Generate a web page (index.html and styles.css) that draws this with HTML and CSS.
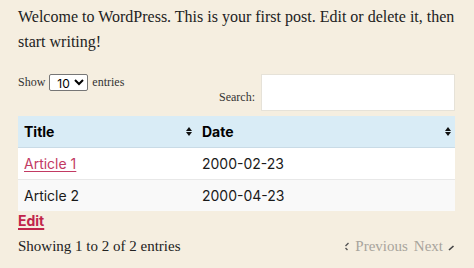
FILE: index.html
```html
<!DOCTYPE html>
<html>
<head>
  <title>First post</title>
  <link rel="stylesheet" href="styles.css">
</head>
<body>
  <div class="content">
    <p class="intro">Welcome to WordPress. This is your first post. Edit or delete it, then start writing!</p>

    <div class="controls">
      <div class="length">
        <label>Show
          <select class="lengthSelect">
            <option>10</option>
            <option>25</option>
            <option>50</option>
          </select>
          entries</label>
      </div>
      <div class="filter">
        <label>Search: <input type="search" class="searchInput"></label>
      </div>
    </div>

    <table class="posts">
      <thead>
        <tr>
          <th class="colTitle">Title <span class="sort"></span></th>
          <th>Date <span class="sort"></span></th>
        </tr>
      </thead>
      <tbody>
        <tr class="odd">
          <td><a href="#">Article 1</a></td>
          <td>2000-02-23</td>
        </tr>
        <tr class="even">
          <td>Article 2</td>
          <td>2000-04-23</td>
        </tr>
      </tbody>
    </table>

    <a class="editLink" href="#">Edit</a>

    <div class="footer">
      <div class="info">Showing 1 to 2 of 2 entries</div>
      <div class="paginate">
        <svg class="pgIcon" width="6" height="9" viewBox="0 0 6 9"><path d="M4.5 1 L1.5 4 M1.5 6 L3.5 8" stroke="#555" stroke-width="1.4" fill="none"/></svg>
        <span class="pgBtn">Previous</span>
        <span class="pgBtn">Next</span>
        <svg class="pgIcon" width="7" height="9" viewBox="0 0 7 9"><path d="M1 8 L5.5 4" stroke="#444" stroke-width="1.6" fill="none"/></svg>
      </div>
    </div>
  </div>
</body>
</html>
```

FILE: styles.css
```css
body {
  margin: 0;
  background-color: #f5eee0;
  color: #222;
  font-family: "Liberation Serif", "DejaVu Serif", serif;
}
.content {
  padding: 4px 19px 0 18px;
}
.intro {
  margin: 0 0 20px;
  font-size: 16px;
  line-height: 25px;
  color: #222;
}
.controls {
  display: flex;
  justify-content: space-between;
  align-items: flex-start;
  font-size: 12px;
  color: #333;
}
.length label {
  display: flex;
  align-items: center;
  gap: 4px;
}
.lengthSelect {
  width: 39px;
  height: 17px;
  padding: 0 0 0 3px;
  font-family: "Inter", "Noto Sans", sans-serif;
  font-size: 12px;
  border: 1px solid #767676;
  border-radius: 2px;
  background: #fff;
  color: #000;
}
.filter label {
  display: flex;
  align-items: center;
  gap: 6px;
  padding-top: 10px;
}
.searchInput {
  width: 194px;
  height: 37px;
  box-sizing: border-box;
  margin-top: -10px;
  border: 1px solid #e6e2d8;
  background: #fff;
  outline: none;
}
.posts {
  width: 100%;
  margin-top: 5px;
  border-collapse: collapse;
  font-family: "Inter", "Noto Sans", sans-serif;
  font-size: 14px;
  color: #1a1a1a;
}
.posts th {
  position: relative;
  height: 31px;
  padding: 0 6px;
  text-align: left;
  font-weight: 700;
  font-size: 14px;
  color: #000;
  background: #d9ecf6;
  border-bottom: 1px solid #c9dbe6;
}
.posts th.colTitle {
  width: 166px;
}
.sort {
  position: absolute;
  right: 4px;
  top: 11px;
  width: 0;
  height: 0;
}
.sort::before,
.sort::after {
  content: "";
  position: absolute;
  right: 0;
  border-left: 3px solid transparent;
  border-right: 3px solid transparent;
}
.sort::before {
  top: 0;
  border-bottom: 4px solid #111;
}
.sort::after {
  top: 5px;
  border-top: 4px solid #111;
}
.posts td {
  height: 31px;
  padding: 0 6px;
}
.posts tr.odd td {
  background: #fff;
  border-bottom: 1px solid #e8e8e8;
}
.posts tr.even td {
  background: #f9f9f9;
}
.posts a {
  color: #c23a63;
  text-decoration: underline;
  text-underline-offset: 2px;
}
.editLink {
  display: inline-block;
  margin-top: 1px;
  font-family: "Inter", "Noto Sans", sans-serif;
  font-weight: 700;
  font-size: 14px;
  color: #c1244b;
  text-decoration: underline;
  text-decoration-thickness: 2px;
  text-underline-offset: 2px;
}
.footer {
  display: flex;
  justify-content: space-between;
  align-items: center;
  margin-top: 8px;
  font-size: 15px;
}
.info {
  color: #222;
}
.paginate {
  display: flex;
  align-items: center;
  gap: 4px;
  color: #a8a49c;
  font-size: 15px;
}
.pgBtn {
  padding: 0 1px;
}
```
